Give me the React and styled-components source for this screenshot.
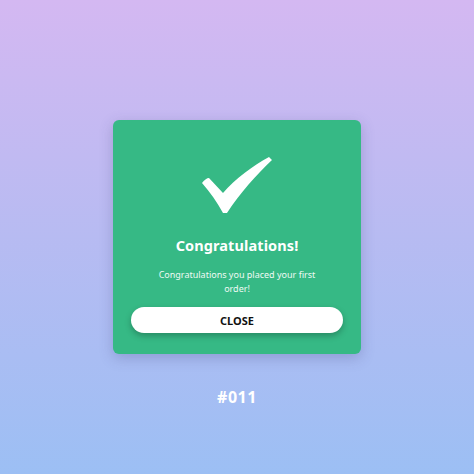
import styled, { createGlobalStyle } from "styled-components";

const Global = createGlobalStyle`
  html, body {
    margin: 0;
    padding: 0;
  }
  body {
    font-family: "Noto Sans", "Open Sans", sans-serif;
  }
`;

function Check() {
  return (
    <svg width="72" height="58" viewBox="0 0 72 58">
      <path
        d="M0 26 C2 23 5 21 7 21 L21 36 C33 22 52 8 67 0 L70 3 C55 17 38 36 25 56 L21 56 C15 45 8 35 0 26 Z"
        fill="#fff"
      />
    </svg>
  );
}

function App() {
  return (
    <>
      <Global />
      <Page>
        <Card>
          <IconWrap>
            <Check />
          </IconWrap>
          <Title>Congratulations!</Title>
          <Message>Congratulations you placed your first order!</Message>
          <Button>CLOSE</Button>
        </Card>
        <Tag>#011</Tag>
      </Page>
    </>
  );
}

export default App;

const Page = styled.div`
  width: 474px;
  height: 474px;
  box-sizing: border-box;
  background: linear-gradient(180deg, #d4b8f2 0%, #b7bbf2 50%, #9cbff4 100%);
  display: flex;
  flex-direction: column;
  align-items: center;
  padding-top: 120px;
`;

const Card = styled.div`
  width: 248px;
  height: 234px;
  box-sizing: border-box;
  background: #36b985;
  border-radius: 6px;
  box-shadow: 0 4px 14px rgba(60, 60, 120, 0.25);
  display: flex;
  flex-direction: column;
  align-items: center;
  padding: 37px 18px 0;
  color: #fff;
`;

const IconWrap = styled.div`
  width: 72px;
  height: 58px;
  margin-left: 2px;
`;

const Title = styled.h2`
  margin: 20px 0 0;
  font-size: 14.5px;
  font-weight: 700;
  letter-spacing: 0.1px;
  line-height: 20px;
`;

const Message = styled.p`
  margin: 13px 0 0;
  width: 170px;
  text-align: center;
  font-size: 9px;
  line-height: 14px;
  color: #eefaf4;
`;

const Button = styled.button`
  margin-top: 11px;
  width: 212px;
  height: 26px;
  border: none;
  border-radius: 13px;
  background: #fff;
  color: #111;
  font-family: "Noto Sans", sans-serif;
  font-weight: 700;
  font-size: 11px;
  box-shadow: 0 3px 6px rgba(0, 0, 0, 0.25);
  cursor: pointer;
`;

const Tag = styled.div`
  margin-top: 32px;
  color: #fff;
  font-size: 16px;
  font-weight: 700;
  letter-spacing: 0.5px;
`;
